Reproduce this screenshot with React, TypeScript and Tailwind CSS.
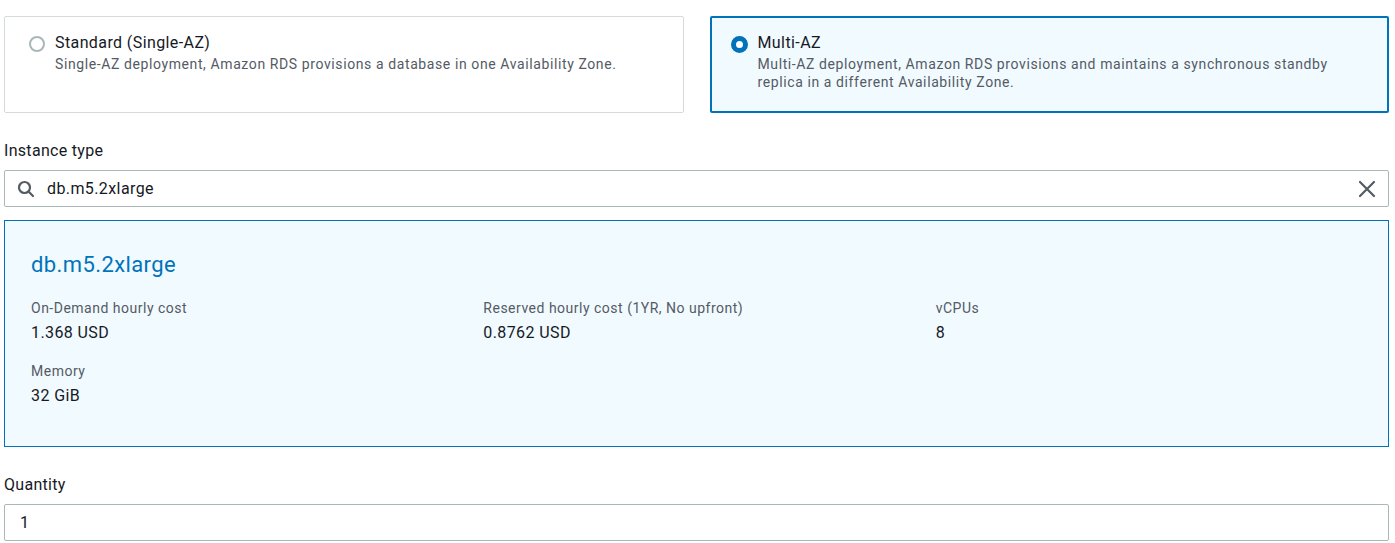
import React from "react";

export default function App() {
  return (
    <div className="w-[1395px] h-[543px] bg-white overflow-hidden text-[#16191f]" style={{ fontFamily: "Roboto, 'Liberation Sans', sans-serif" }}>
      <div className="pl-[4px] pr-[6px] pt-[16px]">
        <div className="grid grid-cols-2 gap-[26px]">
          <div className="h-[97px] border border-[#d5dbdb] rounded-[2px] pl-[24px] pt-[16px] flex gap-[10px]">
            <div className="w-[16px] h-[16px] mt-[3px] rounded-full border-2 border-[#aab7b8] shrink-0" />
            <div>
              <div className="text-[16px] leading-[20px] tracking-[0.4px]">Standard (Single-AZ)</div>
              <div className="text-[14px] leading-[18px] tracking-[0.6px] text-[#545b64] mt-[2px]">Single-AZ deployment, Amazon RDS provisions a database in one Availability Zone.</div>
            </div>
          </div>
          <div className="h-[97px] border-2 border-[#0073bb] bg-[#f1faff] rounded-[2px] pl-[19px] pt-[15px] flex gap-[10px]">
            <div className="w-[17px] h-[17px] mt-[3px] rounded-full border-[5px] border-[#0073bb] bg-white shrink-0" />
            <div>
              <div className="text-[16px] leading-[20px] tracking-[0.4px]">Multi-AZ</div>
              <div className="text-[14px] leading-[18px] tracking-[0.6px] text-[#545b64] mt-[2px] pr-[40px]">Multi-AZ deployment, Amazon RDS provisions and maintains a synchronous standby replica in a different Availability Zone.</div>
            </div>
          </div>
        </div>
        <div className="text-[16px] leading-[20px] tracking-[0.3px] mt-[28px]">Instance type</div>
        <div className="mt-[9px] h-[37px] border border-[#aab7b8] rounded-[2px] flex items-center pl-[12px] pr-[12px]">
          <svg width="18" height="18" viewBox="0 0 18 18" fill="none" stroke="#545b64" strokeWidth="2.2"><circle cx="7.5" cy="7.5" r="5.5" /><path d="M11.5 11.5L16 16" strokeLinecap="round" /></svg>
          <span className="ml-[12px] text-[16px] tracking-[0.4px]">db.m5.2xlarge</span>
          <svg className="ml-auto" width="18" height="18" viewBox="0 0 18 18" stroke="#545b64" strokeWidth="2.2" strokeLinecap="round"><path d="M2 2L16 16M16 2L2 16" /></svg>
        </div>
        <div className="mt-[13px] h-[227px] border border-[#0073bb] bg-[#f1faff] pl-[26px] pt-[30px]">
          <div className="text-[22px] leading-[28px] tracking-[0.4px] text-[#0073bb]">db.m5.2xlarge</div>
          <div className="grid grid-cols-3 mt-[20px] gap-y-[18px]">
            {[
              ["On-Demand hourly cost", "1.368 USD"],
              ["Reserved hourly cost (1YR, No upfront)", "0.8762 USD"],
              ["vCPUs", "8"],
              ["Memory", "32 GiB"],
            ].map(([k, v]) => (
              <div key={k}>
                <div className="text-[14px] leading-[18px] tracking-[0.5px] text-[#545b64]">{k}</div>
                <div className="text-[16px] leading-[22px] tracking-[0.4px] mt-[5px]">{v}</div>
              </div>
            ))}
          </div>
        </div>
        <div className="text-[16px] leading-[20px] tracking-[0.3px] mt-[28px]">Quantity</div>
        <div className="mt-[9px] h-[37px] border border-[#aab7b8] rounded-[2px] flex items-center pl-[15px] text-[16px]">1</div>
      </div>
    </div>
  );
}
